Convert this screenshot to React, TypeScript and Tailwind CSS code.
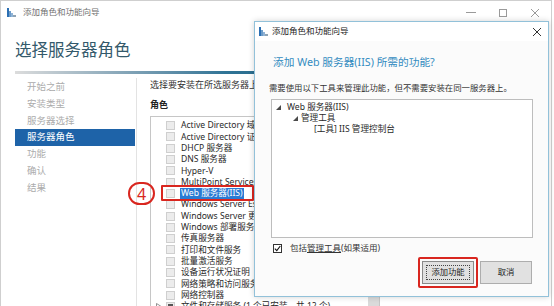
import React from "react";

const font = "font-['Noto_Sans','Noto_Sans_CJK_SC',sans-serif]";

const navItems = ["开始之前", "安装类型", "服务器选择", "服务器角色", "功能", "确认", "结果"];

const roles = [
  "Active Directory 域服务",
  "Active Directory 证书服务",
  "DHCP 服务器",
  "DNS 服务器",
  "Hyper-V",
  "MultiPoint Services",
  "Web 服务器(IIS)",
  "Windows Server Essentials 体验",
  "Windows Server 更新服务",
  "Windows 部署服务",
  "传真服务器",
  "打印和文件服务",
  "批量激活服务",
  "设备运行状况证明",
  "网络策略和访问服务",
  "网络控制器",
  "文件和存储服务 (1 个已安装，共 12 个)",
];

const WizardIcon: React.FC = () => (
  <svg width="9" height="9" viewBox="0 0 9 9">
    <rect x="0" y="0" width="2" height="9" fill="#2b6fb3" />
    <rect x="2" y="3" width="2" height="6" fill="#6d9cc9" />
    <rect x="4" y="5" width="2" height="4" fill="#8fb3d6" />
    <rect x="6" y="7" width="3" height="2" fill="#8fa3b3" />
  </svg>
);

const TreeArrow: React.FC = () => (
  <svg width="5" height="5" viewBox="0 0 5 5">
    <polygon points="5,0 5,5 0,5" fill="#4a4a4a" />
  </svg>
);

const App: React.FC = () => {
  return (
    <div className={`relative w-[554px] h-[306px] overflow-hidden bg-white ${font}`}>
      {/* main wizard window */}
      <div className="flex flex-col w-[552px] h-full border-l border-r border-t border-[#cfcfcf] bg-white">
        <div className="flex items-center h-[23px] pl-[6px]">
          <WizardIcon />
          <span className="ml-[7px] text-[8.5px] text-[#707070]">添加角色和功能向导</span>
          <div className="ml-auto flex h-full">
            <div className="w-[32px] flex items-center justify-center">
              <div className="w-[10px] h-px bg-[#9a9a9a]" />
            </div>
            <div className="w-[32px] flex items-center justify-center">
              <div className="w-[8px] h-[8px] border border-[#9a9a9a]" />
            </div>
            <div className="w-[32px] flex items-center justify-center">
              <svg width="8" height="8" viewBox="0 0 8 8">
                <path d="M0 0 L8 8 M8 0 L0 8" stroke="#9a9a9a" strokeWidth="1" />
              </svg>
            </div>
          </div>
        </div>

        <h1 className="mt-[14px] pl-[14px] text-[16.5px] leading-[24px] text-[#34596b]">选择服务器角色</h1>
        <div className="mt-[9px] ml-[14px] h-[3px] w-[420px] bg-gradient-to-r from-[#dcdcdc] via-[#2f7496] to-[#1b4d69]" />

        <div className="flex flex-1 min-h-0">
          <div className="w-[136px] mt-[4px] pt-[1px] pl-[14px] border-r border-[#e3e3e3]">
            {navItems.map((item) => (
              <div
                key={item}
                className={`w-[120px] h-[16.8px] leading-[16.8px] pl-[12px] text-[9.5px] ${
                  item === "服务器角色" ? "bg-[#1e63a8] text-white" : "text-[#acacac]"
                }`}
              >
                {item}
              </div>
            ))}
          </div>

          <div className="pl-[13px] flex-1">
            <p className="mt-[4px] w-[104px] overflow-hidden text-[9px] leading-[14px] text-[#333] whitespace-nowrap">
              选择要安装在所选服务器上的一个或多个角色。
            </p>
            <p className="mt-[6px] text-[9px] leading-[14px] font-bold text-[#222]">角色</p>
            <div className="mt-[4px] flex w-[230px] h-[200px] border border-[#c6c6c6] bg-white">
              <div className="flex-1 pt-[3px] overflow-hidden">
                {roles.map((role, i) => {
                  const last = i === roles.length - 1;
                  return (
                    <div key={role} className="flex items-center h-[11.3px]">
                      <div className="w-[15px] flex justify-center">
                        {last && (
                          <svg width="5" height="6" viewBox="0 0 5 6">
                            <polygon points="0.5,0.5 4.5,3 0.5,5.5" fill="none" stroke="#777" strokeWidth="0.8" />
                          </svg>
                        )}
                      </div>
                      <div className="w-[9px] h-[9px] border border-[#cfcfcf] bg-[#ececec] flex items-center justify-center">
                        {last && <div className="w-[5px] h-[5px] bg-[#555]" />}
                      </div>
                      <span
                        className={`text-[8.6px] leading-[10.5px] whitespace-nowrap ${
                          role === "Web 服务器(IIS)" ? "ml-[5px] px-px bg-[#2a7bd4] text-white" : "ml-[6px] text-[#2a2a2a]"
                        }`}
                      >
                        {role}
                      </span>
                    </div>
                  );
                })}
              </div>
              <div className="w-[11px] bg-[#dadada]" />
            </div>
          </div>
        </div>
      </div>

      {/* annotation: step number and highlight */}
      <div className="absolute left-[128px] top-[182px] w-[27px] h-[23px] rounded-full border-2 border-[#d9261f] flex items-center justify-center">
        <span className="text-[16px] leading-none text-[#d9261f]">4</span>
      </div>
      <div className="absolute left-[161px] top-[185px] w-[93px] h-[16px] border-2 border-[#d9261f] rounded-[1px]" />

      {/* add features dialog */}
      <div className="absolute left-[254px] top-[21px] w-[295px] h-[276px] border border-[#92c1d9] bg-[#fbfbfb] shadow-[0_0_6px_rgba(0,0,0,0.18)] flex flex-col">
        <div className="flex items-center h-[19px] pl-[4px] pr-[7px] bg-white">
          <WizardIcon />
          <span className="ml-[4px] text-[8.5px] text-[#222]">添加角色和功能向导</span>
          <svg className="ml-auto" width="8" height="8" viewBox="0 0 8 8">
            <path d="M0 0 L8 8 M8 0 L0 8" stroke="#333" strokeWidth="1" />
          </svg>
        </div>

        <div className="px-[16px] pt-[13px]">
          <h2 className="ml-[2px] text-[10.7px] leading-[16px] text-[#338bc0] whitespace-nowrap">
            添加 Web 服务器(IIS) 所需的功能?
          </h2>
          <p className="mt-[12px] -ml-[2px] text-[8.4px] leading-[12px] text-[#333] whitespace-nowrap">
            需要使用以下工具来管理此功能，但不需要安装在同一服务器上。
          </p>

          <div className="mt-[5px] w-[262px] h-[139px] border border-[#bdbdbd] bg-white pt-[1.5px] text-[8.6px] text-[#2a2a2a]">
            <div className="flex items-center h-[11px] pl-[4px]">
              <TreeArrow />
              <span className="ml-[6px] leading-none">Web 服务器(IIS)</span>
            </div>
            <div className="flex items-center h-[11px] pl-[21px]">
              <TreeArrow />
              <span className="ml-[3px] leading-none">管理工具</span>
            </div>
            <div className="flex items-center h-[11px] pl-[42px]">
              <span className="leading-none">[工具] IIS 管理控制台</span>
            </div>
          </div>

          <div className="mt-[5px] flex items-center h-[10px] pl-[2px]">
            <div className="w-[9px] h-[9px] border border-[#333] bg-white flex items-center justify-center">
              <svg width="7" height="7" viewBox="0 0 7 7">
                <path d="M0.8 3.6 L2.8 5.6 L6.3 1" fill="none" stroke="#111" strokeWidth="1.1" />
              </svg>
            </div>
            <span className="ml-[8px] text-[8.5px] leading-none text-[#333] whitespace-nowrap">
              包括<span className="underline">管理工具</span>(如果适用)
            </span>
          </div>

          <div className="mt-[8px] flex justify-end gap-[6px]">
            <button className="relative w-[52px] h-[23px] border border-[#8a8a8a] bg-[#e1e1e1] text-[8.3px] text-[#222]">
              <span className="absolute inset-[3px] border border-dotted border-[#444]" />
              添加功能
            </button>
            <button className="w-[52px] h-[23px] border border-[#adadad] bg-[#e1e1e1] text-[8.3px] text-[#222]">
              取消
            </button>
          </div>
        </div>
      </div>

      <div className="absolute left-[418px] top-[257px] w-[60px] h-[31px] border-2 border-[#d9261f] rounded-[2px]" />
    </div>
  );
};

export default App;
